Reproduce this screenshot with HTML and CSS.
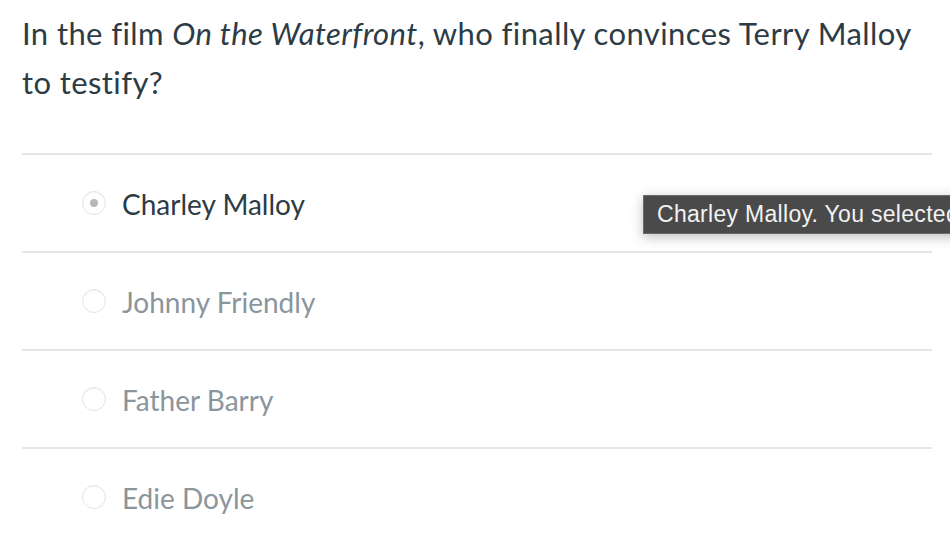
FILE: index.html
```html
<!DOCTYPE html>
<html>
<head>
<meta charset="utf-8">
<link rel="stylesheet" href="styles.css">
</head>
<body>
<div class="quiz">
  <p class="question">In the film <em>On the Waterfront</em>, who finally convinces Terry Malloy to testify?</p>
  <div class="answers">
    <div class="answer selected">
      <span class="radio"><span class="dot"></span></span>
      <span class="label">Charley Malloy</span>
    </div>
    <div class="answer">
      <span class="radio"></span>
      <span class="label">Johnny Friendly</span>
    </div>
    <div class="answer">
      <span class="radio"></span>
      <span class="label">Father Barry</span>
    </div>
    <div class="answer">
      <span class="radio"></span>
      <span class="label">Edie Doyle</span>
    </div>
  </div>
  <div class="tooltip">Charley Malloy. You selected this answer.</div>
</div>
</body>
</html>
```

FILE: styles.css
```css
html, body {
  margin: 0;
  padding: 0;
  overflow: hidden;
  background: #ffffff;
}
body {
  width: 950px;
  height: 548px;
  font-family: Lato, "Noto Sans", sans-serif;
}
.quiz {
  position: relative;
  height: 548px;
  overflow: hidden;
  padding: 0 0 0 22px;
}
.question {
  margin: 0;
  padding-top: 9px;
  font-size: 31px;
  letter-spacing: 0.4px;
  line-height: 49px;
  color: #2d3b45;
  width: 910px;
}
.question em {
  font-style: italic;
}
.answers {
  margin-top: 46px;
  width: 910px;
}
.answer {
  display: flex;
  align-items: center;
  height: 96px;
  border-top: 2px solid #e6e6e6;
  padding-left: 60px;
}
.radio {
  width: 22px;
  height: 22px;
  border-radius: 50%;
  border: 1px solid #e4e4e4;
  background: #fff;
  box-shadow: inset 0 1px 2px rgba(0,0,0,0.04);
  display: flex;
  align-items: center;
  justify-content: center;
  margin-right: 16px;
  flex: none;
}
.dot {
  width: 8px;
  height: 8px;
  border-radius: 50%;
  background: #b8b8b8;
}
.label {
  font-size: 28px;
  color: #8b959c;
  position: relative;
  top: 1px;
}
.selected .label {
  color: #2d3b45;
}
.tooltip {
  position: absolute;
  left: 643px;
  top: 195px;
  height: 39px;
  width: 360px;
  box-sizing: border-box;
  background: #4a4a4a;
  border: 1px solid #6a6a6a;
  color: #f2f2f2;
  font-family: "Liberation Sans", Arial, sans-serif;
  font-size: 23px;
  letter-spacing: 0.3px;
  line-height: 37px;
  padding-left: 13px;
  white-space: nowrap;
  overflow: hidden;
  box-shadow: 0 3px 12px rgba(0,0,0,0.25);
}
```
